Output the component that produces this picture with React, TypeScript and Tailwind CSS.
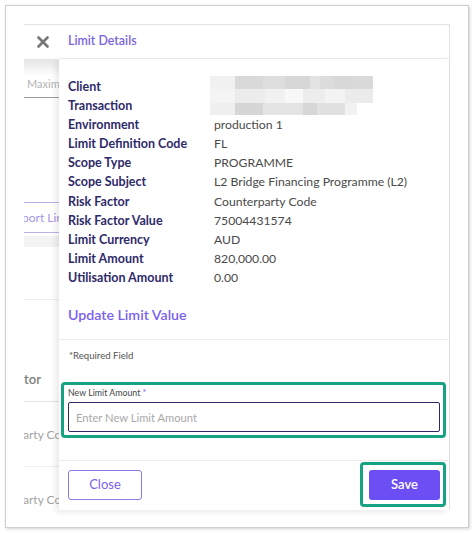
import { X } from "lucide-react";

const details: [string, string][] = [
  ["Client", ""],
  ["Transaction", ""],
  ["Environment", "production 1"],
  ["Limit Definition Code", "FL"],
  ["Scope Type", "PROGRAMME"],
  ["Scope Subject", "L2 Bridge Financing Programme (L2)"],
  ["Risk Factor", "Counterparty Code"],
  ["Risk Factor Value", "75004431574"],
  ["Limit Currency", "AUD"],
  ["Limit Amount", "820,000.00"],
  ["Utilisation Amount", "0.00"],
];

// pixelated redaction over client / transaction values
const blurRows: { h: number; cells: [number, string][] }[] = [
  {
    h: 13,
    cells: [
      [25, "#f1f1f1"],
      [28, "#d9d9d9"],
      [22, "#dedede"],
      [25, "#d7d7d7"],
      [10, "#e3e3e3"],
      [14, "#dcdcdc"],
      [18, "#d8d8d8"],
      [21, "#dadada"],
    ],
  },
  {
    h: 14,
    cells: [
      [25, "#f4f4f4"],
      [30, "#ececec"],
      [20, "#f1f1f1"],
      [18, "#f8f8f8"],
      [22, "#ededed"],
      [20, "#f3f3f3"],
      [28, "#ebebeb"],
    ],
  },
  {
    h: 12,
    cells: [
      [25, "#efefef"],
      [28, "#d6d6d6"],
      [40, "#e4e4e4"],
      [14, "#d7d7d7"],
      [28, "#e1e1e1"],
      [12, "#f2f2f2"],
    ],
  },
];

function Redacted() {
  return (
    <div className="absolute left-[-4px] top-[-1px] flex w-[163px] flex-col">
      {blurRows.map((row, i) => (
        <div key={i} className="flex" style={{ height: row.h }}>
          {row.cells.map(([w, c], j) => (
            <div key={j} style={{ width: w, background: c }} />
          ))}
        </div>
      ))}
    </div>
  );
}

function BackgroundPage() {
  return (
    <div className="flex w-[35px] shrink-0 flex-col overflow-hidden whitespace-nowrap">
      <div className="h-[17px] bg-gradient-to-b from-[#e4e4e4] to-white" />
      <div className="h-[22px] border-b border-[#9c9c9c] pl-[3px] text-[11px] leading-[16px] text-[#b3b3b3]">
        Maxim
      </div>
      <div className="h-[105px] border-b border-[#bcb1ec]" />
      <div className="h-[30px] border-b border-[#bcb1ec] -ml-[2px] text-[12px] leading-[29px] text-[#a495e8]">
        port Lir
      </div>
      <div className="mt-[3px] h-[11px] bg-[#f3f3f3]" />
      <div className="h-[53px] border-b border-[#ededed]" />
      <div className="h-[102px] border-b border-[#e3e3e3] pt-[71px] text-[13px] font-semibold leading-[16px] text-[#7d7d7d]">
        tor
      </div>
      <div className="h-[65px] border-b border-[#eeeeee] pt-[25px] -ml-[1px] text-[12px] leading-[16px] text-[#a3a3a3]">
        arty Co
      </div>
      <div className="pt-[25px] -ml-[1px] text-[12px] leading-[16px] text-[#a3a3a3]">
        arty Co
      </div>
    </div>
  );
}

function LimitModal() {
  return (
    <section className="flex w-[390px] flex-col bg-white shadow-[-3px_2px_6px_rgba(0,0,0,0.09)]">
      <div className="px-[9px] pt-[18px]">
        <dl className="grid grid-cols-[146px_1fr] leading-[19.1px]">
          {details.map(([label, value]) => (
            <div key={label} className="contents">
              <dt className="text-[12.5px] font-bold text-[#2e2a6a]">{label}</dt>
              <dd className="relative text-[12.2px] text-[#4a4a4a]">
                {label === "Client" && <Redacted />}
                {value}
              </dd>
            </div>
          ))}
        </dl>
        <h3 className="mt-[18px] mb-[14px] text-[14.2px] font-semibold leading-[20px] text-[#7b5ff0]">
          Update Limit Value
        </h3>
      </div>

      <div className="border-t border-[#ececec] px-[9px] pb-[22px] pt-[10px]">
        <p className="pl-[1px] text-[9.6px] leading-[12px] text-[#555]">*Required Field</p>
        <div className="-ml-[7px] -mr-[6px] mt-[20px] rounded-[4px] border-[3px] border-[#17a382] pb-[3px] pl-[4px] pr-[3px] pt-[2px]">
          <label className="block text-[8.8px] leading-[12px] text-[#444]">
            New Limit Amount <span className="text-[#7b5ff0]">*</span>
          </label>
          <input
            placeholder="Enter New Limit Amount"
            className="mt-[3px] block h-[30px] w-full rounded-[2px] border border-[#2e2a6a] px-[7px] text-[11.2px] text-[#333] outline-none placeholder:text-[#a9a9a9]"
          />
        </div>
      </div>

      <div className="flex items-center justify-between border-t border-[#ececec] pb-[3px] pl-[9px] pr-[3px] pt-[1px]">
        <button className="h-[30px] w-[74px] rounded-[3px] border border-[#8f7be8] text-[13px] text-[#7b5ff0]">
          Close
        </button>
        <div className="rounded-[4px] border-[3px] border-[#17a382] pb-[4px] pl-[6px] pr-[3px] pt-[5px]">
          <button className="h-[30px] w-[71px] rounded-[3px] bg-[#6b4ff5] text-[13px] font-semibold text-white">
            Save
          </button>
        </div>
      </div>
    </section>
  );
}

export default function App() {
  return (
    <div
      className="h-[533px] w-[474px] bg-white pl-[5px] pt-[5px]"
      style={{ fontFamily: "Lato, 'Open Sans', sans-serif" }}
    >
      <div className="h-[523px] w-[464px] border border-[#cfcfcf] pl-[18px] pt-[18px] shadow-[1px_1px_3px_rgba(0,0,0,0.18)]">
        <div className="w-[426px] border-r border-t border-[#e2e2e2]">
          <header className="flex h-[34px]">
            <div className="flex w-[35px] items-center justify-center pl-[3px]">
              <X className="size-[18px] text-[#777]" strokeWidth={3.6} />
            </div>
            <div className="flex flex-1 items-center border-b border-[#ececec] pl-[9px] text-[12.4px] font-semibold text-[#7b63e2]">
              Limit Details
            </div>
          </header>
          <div className="flex">
            <BackgroundPage />
            <LimitModal />
          </div>
        </div>
      </div>
    </div>
  );
}
